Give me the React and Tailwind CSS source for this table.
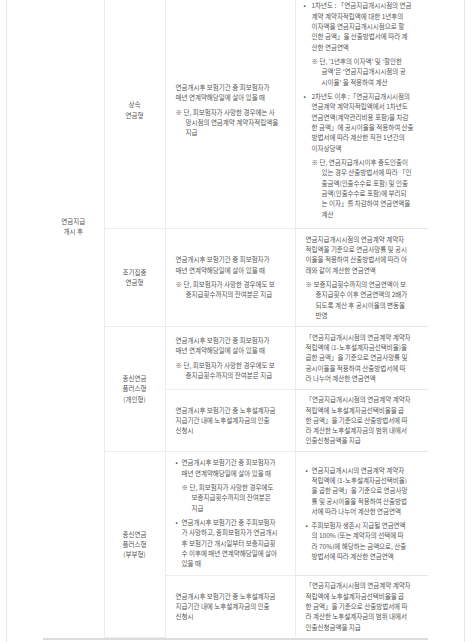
import { Fragment } from "react";

// 줄바꿈 위치를 원본과 맞추기 위해 줄 단위로 넣는다
const Lines = ({ lines }) =>
    lines.map((line, i) => (
        <Fragment key={i}>
            {i > 0 && <br />}
            {line}
        </Fragment>
    ));

const Note = ({ lines, className = "" }) => (
    <div className={`pl-[10px] -indent-[10px] ${className}`}>
        <Lines lines={lines} />
    </div>
);

const Bullet = ({ lines, children, dot = "w-[6px]", className = "" }) => (
    <div className={`flex ${className}`}>
        <span className={`${dot} shrink-0`}>•</span>
        <div>
            <Lines lines={lines} />
            {children}
        </div>
    </div>
);

const cond = ["연금개시후 보험기간 중 피보험자가", "매년 연계약해당일에 살아 있을 때"];
const condNote = ["※ 단, 피보험자가 사망한 경우에도 보", "증지급횟수까지의 잔여분은 지급"];
const withdrawCond = ["연금개시후 보험기간 중 노후설계자금", "지급기간 내에 노후설계자금의 인출", "신청시"];
const withdrawAmt = [
    "「연금지급개시시점의 연금계약 계약자",
    "적립액에 노후설계자금선택비율을 곱",
    "한 금액」을 기준으로 산출방법서에 따",
    "라 계산한 노후설계자금의 범위 내에서",
    "인출신청금액을 지급",
];

const c2 = "border-r border-b border-[#ececec] text-center align-middle";
const c3 = "border-r border-b border-[#ececec] align-middle pl-[10px] pr-[4px]";
const c4 = "border-b border-[#e6e6e6] align-middle pl-[10px] pr-[4px]";

export default function App() {
    return (
        <div className="min-h-[642px] bg-white overflow-hidden">
            <div className="ml-[6px] w-[459px] min-h-[642px] border-x border-[#e6e6e6] overflow-hidden">
                <div className="-mt-[8px] ml-[36px] w-[385px] border-b-2 border-[#dcdcdc] font-['Noto_Sans_CJK_KR','Noto_Sans',sans-serif] text-[6.5px] leading-[10.33px] text-[#555] whitespace-nowrap">
                    <table className="w-full table-fixed border-collapse">
                        <colgroup>
                            <col className="w-[61px]" />
                            <col className="w-[61px]" />
                            <col className="w-[130px]" />
                            <col className="w-[133px]" />
                        </colgroup>
                        <tbody>
                            <tr>
                                <td rowSpan={6} className="border-r border-[#ececec] align-top text-center pt-[224px]">
                                    <Lines lines={["연금지급", "개시 후"]} />
                                </td>
                                <td className={`${c2} h-[236px]`}>
                                    <Lines lines={["상속", "연금형"]} />
                                </td>
                                <td className={c3}>
                                    <Lines lines={cond} />
                                    <Note className="mt-[4px]" lines={["※ 단, 피보험자가 사망한 경우에는 사", "망시점의 연금계약 계약자적립액을", "지급"]} />
                                </td>
                                <td className={c4}>
                                    <Bullet
                                        dot="w-[8px] -ml-[2px]"
                                        lines={[
                                            "1차년도 : 「연금지급개시시점의 연금",
                                            "계약 계약자적립액에 대한 1년후의",
                                            "이자액을 연금지급개시시점으로 할",
                                            "인한 금액」을 산출방법서에 따라 계",
                                            "산한 연금연액",
                                        ]}
                                    >
                                        <Note className="mt-[4px]" lines={["※ 단, ‘1년후의 이자액’ 및 ‘할인한", "금액’은 ‘연금지급개시시점의 공", "시이율’ 을 적용하여 계산"]} />
                                    </Bullet>
                                    <Bullet
                                        dot="w-[8px] -ml-[2px]"
                                        className="mt-[4px]"
                                        lines={[
                                            "2차년도 이후 :「연금지급개시시점의",
                                            "연금계약 계약자적립액에서 1차년도",
                                            "연금연액(계약관리비용 포함)을 차감",
                                            "한 금액」에 공시이율을 적용하여 산출",
                                            "방법서에 따라 계산한 직전 1년간의",
                                            "이자상당액",
                                        ]}
                                    >
                                        <Note
                                            className="mt-[4px]"
                                            lines={[
                                                "※ 단, 연금지급개시이후 중도인출이",
                                                "있는 경우 산출방법서에 따라 「인",
                                                "출금액(인출수수료 포함) 및 인출",
                                                "금액(인출수수료 포함)에 부리되",
                                                "는 이자」를 차감하여 연금연액을",
                                                "계산",
                                            ]}
                                        />
                                    </Bullet>
                                </td>
                            </tr>
                            <tr>
                                <td className={`${c2} h-[98px]`}>
                                    <Lines lines={["조기집중", "연금형"]} />
                                </td>
                                <td className={c3}>
                                    <Lines lines={cond} />
                                    <Note className="mt-[4px]" lines={condNote} />
                                </td>
                                <td className={c4}>
                                    <Lines
                                        lines={[
                                            "연금지급개시시점의 연금계약 계약자",
                                            "적립액을 기준으로 연금사망률 및 공시",
                                            "이율을 적용하여 산출방법서에 따라 아",
                                            "래와 같이 계산한 연금연액",
                                        ]}
                                    />
                                    <Note className="mt-[4px]" lines={["※ 보증지급횟수까지의 연금연액이 보", "증지급횟수 이후 연금연액의 2배가", "되도록 계산 후 공시이율의 변동을", "반영"]} />
                                </td>
                            </tr>
                            <tr>
                                <td rowSpan={2} className={c2}>
                                    <Lines lines={["종신연금", "플러스형", "(개인형)"]} />
                                </td>
                                <td className={`${c3} h-[63px]`}>
                                    <Lines lines={cond} />
                                    <Note className="mt-[4px]" lines={condNote} />
                                </td>
                                <td className={c4}>
                                    <Lines
                                        lines={[
                                            "「연금지급개시시점의 연금계약 계약자",
                                            "적립액에 (1-노후설계자금선택비율)을",
                                            "곱한 금액」을 기준으로 연금사망률 및",
                                            "공시이율을 적용하여 산출방법서에 따",
                                            "라 나누어 계산한 연금연액",
                                        ]}
                                    />
                                </td>
                            </tr>
                            <tr>
                                <td className={`${c3} h-[62px]`}>
                                    <Lines lines={withdrawCond} />
                                </td>
                                <td className={c4}>
                                    <Lines lines={withdrawAmt} />
                                </td>
                            </tr>
                            <tr>
                                <td rowSpan={2} className={c2}>
                                    <Lines lines={["종신연금", "플러스형", "(부부형)"]} />
                                </td>
                                <td className={`${c3} h-[124px]`}>
                                    <Bullet lines={cond}>
                                        <Note className="mt-[4px] pl-[9px] -indent-[9px]" lines={["※ 단, 피보험자가 사망한 경우에도", "보증지급횟수까지의 잔여분은", "지급"]} />
                                    </Bullet>
                                    <Bullet
                                        className="mt-[4px]"
                                        lines={[
                                            "연금개시후 보험기간 중 주피보험자",
                                            "가 사망하고, 종피보험자가 연금개시",
                                            "후 보험기간 개시일부터 보증지급횟",
                                            "수 이후에 매년 연계약해당일에 살아",
                                            "있을 때",
                                        ]}
                                    />
                                </td>
                                <td className={c4}>
                                    <Bullet
                                        lines={[
                                            "연금지급개시시의 연금계약 계약자",
                                            "적립액에 (1-노후설계자금선택비율)",
                                            "을 곱한 금액」을 기준으로 연금사망",
                                            "률 및 공시이율을 적용하여 산출방법",
                                            "서에 따라 나누어 계산한 연금연액",
                                        ]}
                                    />
                                    <Bullet
                                        className="mt-[4px]"
                                        lines={[
                                            "주피보험자 생존시 지급될 연금연액",
                                            "의 100% (또는 계약자의 선택에 따",
                                            "라 70%)에 해당하는 금액으로, 산출",
                                            "방법서에 따라 계산한 연금연액",
                                        ]}
                                    />
                                </td>
                            </tr>
                            <tr>
                                <td className="border-r border-[#ececec] align-middle pl-[10px] pr-[4px] h-[62px]">
                                    <Lines lines={withdrawCond} />
                                </td>
                                <td className="align-middle pl-[10px] pr-[4px]">
                                    <Lines lines={withdrawAmt} />
                                </td>
                            </tr>
                        </tbody>
                    </table>
                </div>
            </div>
        </div>
    );
}
